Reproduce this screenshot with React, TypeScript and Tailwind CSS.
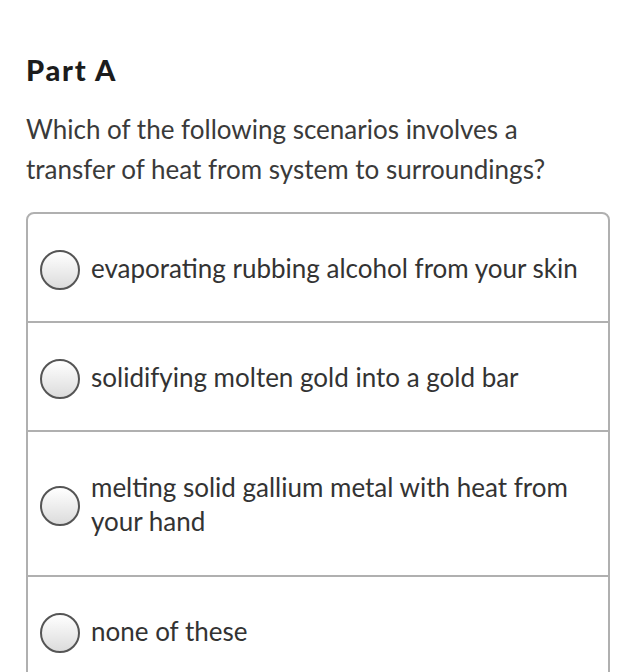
import React from 'react';

const options = [
  { text: 'evaporating rubbing alcohol from your skin', h: 'h-[107px]' },
  { text: 'solidifying molten gold into a gold bar', h: 'h-[109px]' },
  { text: 'melting solid gallium metal with heat from your hand', h: 'h-[145px]' },
  { text: 'none of these', h: 'h-[109px]' },
];

const Radio: React.FC = () => (
  <div className="w-10 h-10 shrink-0 mt-[5px] rounded-full border-2 border-[#555] bg-gradient-to-b from-white to-[#dcdcdc]" />
);

const App: React.FC = () => {
  return (
    <div className="w-[633px] h-[672px] overflow-hidden bg-white font-['Lato','Liberation_Sans',sans-serif] text-[#333]">
      <div className="pl-[26px] pr-[23px] pt-[52px]">
        <h2 className="text-[29px] font-black tracking-[0.06em] text-[#1c1c1c] leading-[36px]">Part A</h2>
        <p className="mt-[21px] text-[26px] leading-[40px] text-[#3a3a3a] pr-[60px]">
          Which of the following scenarios involves a transfer of heat from system to surroundings?
        </p>
        <div className="mt-[23px] border-2 border-[#b0b0b0] rounded-lg">
          {options.map((opt, i) => (
            <div
              key={i}
              className={`flex items-center gap-[11px] pl-[12px] pr-4 ${opt.h} ${i > 0 ? 'border-t-2 border-[#b0b0b0]' : ''}`}
            >
              <Radio />
              <span className="text-[26px] leading-[34px] text-[#333]">{opt.text}</span>
            </div>
          ))}
        </div>
      </div>
    </div>
  );
};

export default App;
